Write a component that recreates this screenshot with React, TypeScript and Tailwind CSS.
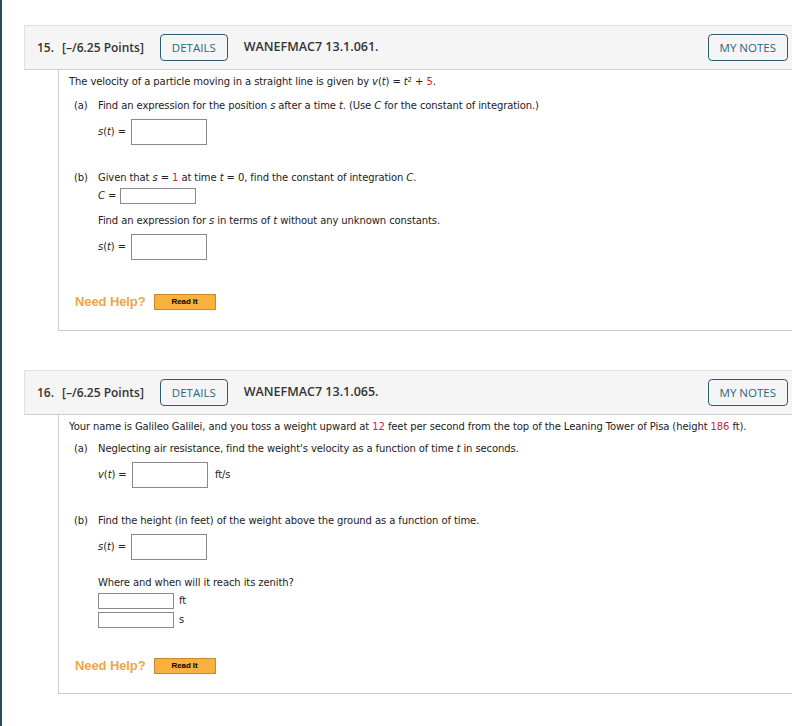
import React from 'react';

const body = { fontFamily: '"DejaVu Sans", Verdana, sans-serif' };
const head = { fontFamily: '"Open Sans", "Segoe UI", sans-serif' };

function Header({ num, code }: { num: string; code: string }) {
  return (
    <div
      className="flex items-center h-[45px] bg-[#f5f5f5] border-t border-b border-l border-t-[#e2e2e2] border-b-[#cfcfcf] border-l-[#e2e2e2] pl-[12px] pr-[4px] text-[#333] text-[12px]"
      style={head}
    >
      <span className="font-semibold">{num}.</span>
      <span className="font-semibold ml-[8px]">[–/6.25 Points]</span>
      <button className="ml-[16px] h-[27px] px-[11px] border border-[#2d5d6d] rounded-[4px] text-[#2b6583] text-[11.5px]">
        DETAILS
      </button>
      <span className="font-semibold ml-[16px] text-[12.5px]">{code}</span>
      <button className="ml-auto h-[27px] px-[11px] border border-[#2d5d6d] rounded-[4px] text-[#2b6583] text-[11.5px]">
        MY NOTES
      </button>
    </div>
  );
}

function Box({ w = 'w-[76px]', h = 'h-[26px]' }: { w?: string; h?: string }) {
  return <div className={`${w} ${h} border border-[#8a8a8a] bg-white`} />;
}

function NeedHelp({ mt }: { mt: string }) {
  return (
    <div className={`flex items-center h-[16px] ml-[6px] ${mt}`}>
      <span className="text-[#eaa64a] font-bold text-[13px]" style={{ fontFamily: '"Liberation Sans", Arial, sans-serif' }}>
        Need Help?
      </span>
      <button
        className="ml-[8px] w-[62px] h-[16px] bg-[#f8b13f] border border-[#c98a2c] text-black font-bold text-[8px] leading-none"
        style={{ fontFamily: '"Liberation Sans", Arial, sans-serif' }}
      >
        Read It
      </button>
    </div>
  );
}

function Part({ label, children, mt }: { label: string; children: React.ReactNode; mt: string }) {
  return (
    <div className={`flex ml-[5px] h-[16px] items-center ${mt}`}>
      <span className="w-[24px]">({label})</span>
      <span>{children}</span>
    </div>
  );
}

const I = ({ children }: { children: React.ReactNode }) => <i>{children}</i>;
const R = ({ children }: { children: React.ReactNode }) => <span className="text-[#d0262a]">{children}</span>;

export default function App() {
  return (
    <div className="min-h-[726px] bg-white border-l-[2px] border-[#2a4b59] pl-[22px] pt-[25px]">
      {/* Question 15 */}
      <Header num="15" code="WANEFMAC7 13.1.061." />
      <div className="ml-[34px] border-l border-b border-[#cccccc] pl-[10px] pt-[4px] pb-[20px] text-[10px] leading-[16px] tracking-[-0.1px] text-[#222]" style={body}>
        <div className="h-[16px]">
          The velocity of a particle moving in a straight line is given by <I>v</I>(<I>t</I>) = <I>t</I>
          <sup className="text-[7px]">2</sup> + <R>5</R>.
        </div>
        <Part label="a" mt="mt-[8px]">
          Find an expression for the position <I>s</I> after a time <I>t</I>. (Use <I>C</I> for the constant of integration.)
        </Part>
        <div className="flex items-center mt-[5px] ml-[29px]">
          <span className="w-[33px]"><I>s</I>(<I>t</I>) =</span>
          <Box />
        </div>
        <Part label="b" mt="mt-[25px]">
          Given that <I>s</I> = <R>1</R> at time <I>t</I> = 0, find the constant of integration <I>C</I>.
        </Part>
        <div className="flex items-center mt-[2px] ml-[29px]">
          <span className="w-[22px]"><I>C</I> =</span>
          <Box h="h-[16px]" />
        </div>
        <div className="h-[16px] mt-[9px] ml-[29px]">
          Find an expression for <I>s</I> in terms of <I>t</I> without any unknown constants.
        </div>
        <div className="flex items-center mt-[5px] ml-[29px]">
          <span className="w-[33px]"><I>s</I>(<I>t</I>) =</span>
          <Box />
        </div>
        <NeedHelp mt="mt-[34px]" />
      </div>

      <div className="h-[39px]" />

      {/* Question 16 */}
      <Header num="16" code="WANEFMAC7 13.1.065." />
      <div className="ml-[34px] border-l border-b border-[#cccccc] pl-[10px] pt-[4px] pb-[19px] text-[10px] leading-[16px] tracking-[-0.1px] text-[#222]" style={body}>
        <div className="h-[16px] whitespace-nowrap">
          Your name is Galileo Galilei, and you toss a weight upward at <R>12</R> feet per second from the top of the Leaning Tower of Pisa (height <R>186</R> ft).
        </div>
        <Part label="a" mt="mt-[6px]">
          Neglecting air resistance, find the weight's velocity as a function of time <I>t</I> in seconds.
        </Part>
        <div className="flex items-center mt-[5px] ml-[29px]">
          <span className="w-[34px]"><I>v</I>(<I>t</I>) =</span>
          <Box />
          <span className="ml-[7px]">ft/s</span>
        </div>
        <Part label="b" mt="mt-[25px]">
          Find the height (in feet) of the weight above the ground as a function of time.
        </Part>
        <div className="flex items-center mt-[5px] ml-[29px]">
          <span className="w-[33px]"><I>s</I>(<I>t</I>) =</span>
          <Box />
        </div>
        <div className="h-[16px] mt-[15px] ml-[29px]">Where and when will it reach its zenith?</div>
        <div className="flex items-center mt-[2px] ml-[29px]">
          <Box h="h-[16px]" />
          <span className="ml-[5px]">ft</span>
        </div>
        <div className="flex items-center mt-[3px] ml-[29px]">
          <Box h="h-[16px]" />
          <span className="ml-[5px]">s</span>
        </div>
        <NeedHelp mt="mt-[30px]" />
      </div>
    </div>
  );
}
